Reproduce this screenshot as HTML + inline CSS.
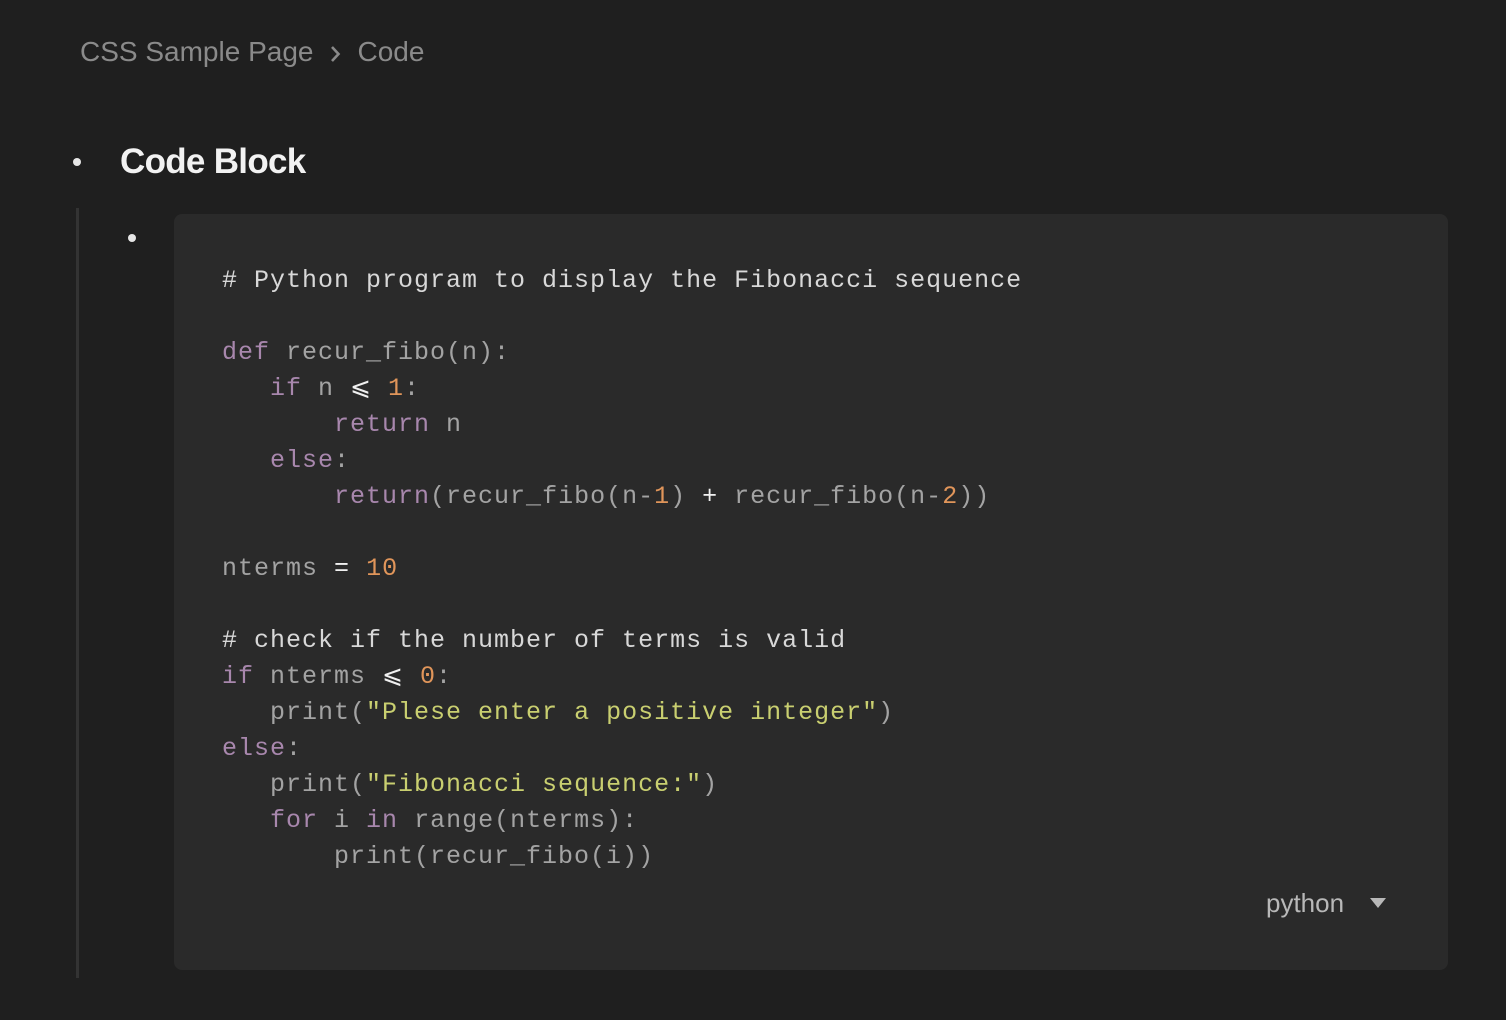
<!DOCTYPE html>
<html><head><meta charset="utf-8"><style>
html,body{margin:0;padding:0;background:#1f1f1f;width:1506px;height:1020px;overflow:hidden;font-family:"Liberation Sans",sans-serif}
.bc{position:absolute;left:80px;top:36px;font-size:28px;color:#8a8a8a;white-space:nowrap}
.bc svg{display:inline-block;margin:0 16px 0 16px;vertical-align:middle}
.dot{position:absolute;width:8px;height:8px;border-radius:50%;background:#e6e6e6}
.h{position:absolute;left:120px;top:142px;font-size:35px;font-weight:bold;color:#f2f2f2;letter-spacing:-0.7px}
.vl{position:absolute;left:76px;top:208px;width:3px;height:770px;background:#333}
.cb{position:absolute;left:174px;top:214px;width:1274px;height:756px;background:#2a2a2a;border-radius:8px}
pre{position:absolute;left:222px;top:263px;margin:0;font-family:"Liberation Mono","DejaVu Sans Mono",monospace;font-size:25px;letter-spacing:1px;line-height:36px;color:#a3a3a3}
.c{color:#d8d8d8}.k{color:#a887ad}.n{color:#e0955a}.s{color:#c9cf70}.o{color:#f0f0f0}
.lang{position:absolute;left:1266px;top:888px;font-size:26px;color:#b8b8b8}
.tri{position:absolute;left:1370px;top:898px;width:0;height:0;border-left:8px solid transparent;border-right:8px solid transparent;border-top:10px solid #b8b8b8}
</style></head><body>
<div class="bc">CSS Sample Page<svg width="12" height="18" viewBox="0 0 12 18"><path d="M3 2 L9.5 9 L3 16" fill="none" stroke="#8a8a8a" stroke-width="2.6"/></svg>Code</div>
<div class="dot" style="left:73px;top:158px"></div>
<div class="h">Code Block</div>
<div class="vl"></div>
<div class="dot" style="left:128px;top:234px"></div>
<div class="cb"></div>
<pre><span class="c"># Python program to display the Fibonacci sequence</span>

<span class="k">def</span> recur_fibo(n):
   <span class="k">if</span> n <span class="o">⩽</span> <span class="n">1</span>:
       <span class="k">return</span> n
   <span class="k">else</span>:
       <span class="k">return</span>(recur_fibo(n-<span class="n">1</span>) <span class="o">+</span> recur_fibo(n-<span class="n">2</span>))

nterms <span class="o">=</span> <span class="n">10</span>

<span class="c"># check if the number of terms is valid</span>
<span class="k">if</span> nterms <span class="o">⩽</span> <span class="n">0</span>:
   print(<span class="s">"Plese enter a positive integer"</span>)
<span class="k">else</span>:
   print(<span class="s">"Fibonacci sequence:"</span>)
   <span class="k">for</span> i <span class="k">in</span> range(nterms):
       print(recur_fibo(i))</pre>
<div class="lang">python</div>
<div class="tri"></div>
</body></html>
